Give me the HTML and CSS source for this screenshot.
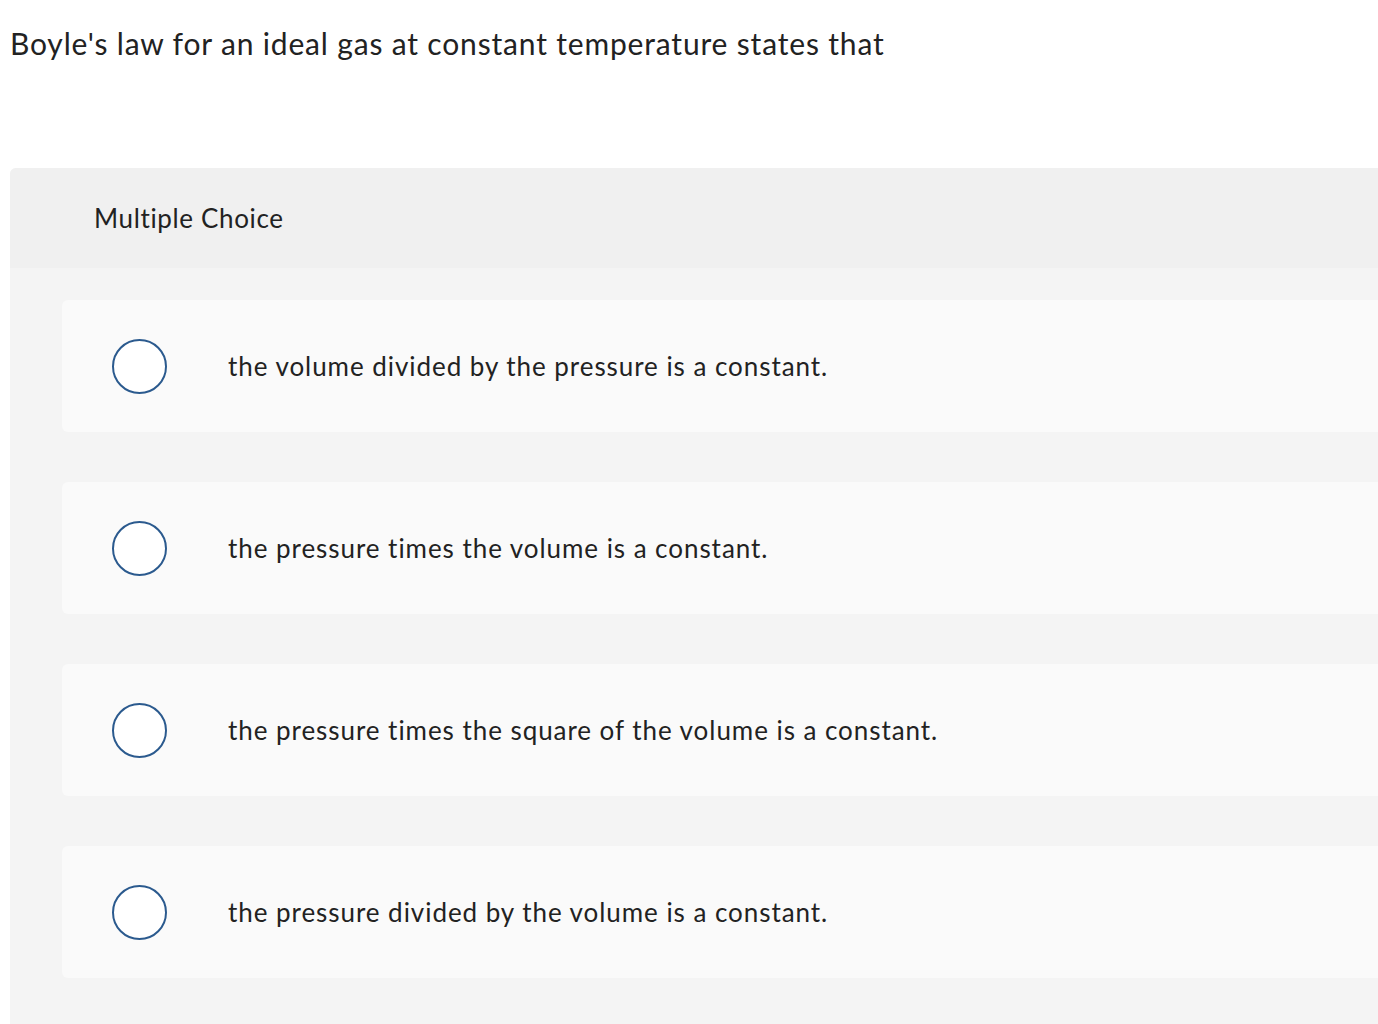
FILE: index.html
```html
<!DOCTYPE html>
<html lang="en">
<head>
    <meta charset="UTF-8">
    <meta name="viewport" content="width=device-width, initial-scale=1.0">
    <title>Multiple Choice</title>
    <link rel="stylesheet" href="styles.css">
</head>
<body>
    <p class="question">Boyle's law for an ideal gas at constant temperature states that</p>

    <div class="panel">
        <div class="panel-head">Multiple Choice</div>
        <div class="choices">
            <label class="choice">
                <span class="radio"></span>
                <span class="choice-text">the volume divided by the pressure is a constant.</span>
            </label>
            <label class="choice">
                <span class="radio"></span>
                <span class="choice-text">the pressure times the volume is a constant.</span>
            </label>
            <label class="choice">
                <span class="radio"></span>
                <span class="choice-text">the pressure times the square of the volume is a constant.</span>
            </label>
            <label class="choice">
                <span class="radio"></span>
                <span class="choice-text">the pressure divided by the volume is a constant.</span>
            </label>
        </div>
    </div>
</body>
</html>
```

FILE: styles.css
```css
body{
    margin: 0;
    background: #fff;
    font-family: Lato, "Open Sans", sans-serif;
    color: #222;
    overflow: hidden;
}
.question{
    margin: 0;
    padding: 23px 0 0 10px;
    font-size: 30px;
    letter-spacing: 0.83px;
    line-height: 40px;
    height: 168px;
    box-sizing: border-box;
}
.panel{
    margin-left: 10px;
    background: #f4f4f4;
    border-top-left-radius: 6px;
    min-height: 900px;
}
.panel-head{
    background: #f0f0f0;
    border-top-left-radius: 6px;
    height: 100px;
    display: flex;
    align-items: center;
    padding-left: 84px;
    font-size: 26px;
    letter-spacing: 0.65px;
}
.choices{
    display: flex;
    flex-direction: column;
    gap: 50px;
    padding: 32px 0 0 52px;
}
.choice{
    height: 132px;
    background: #fafafa;
    border-radius: 6px 0 0 6px;
    display: flex;
    align-items: center;
    padding-left: 50px;
}
.radio{
    width: 51px;
    height: 51px;
    border: 2px solid #2b5a8e;
    border-radius: 50%;
    background: #fff;
    flex-shrink: 0;
}
.choice-text{
    margin-left: 61px;
    font-size: 26px;
    letter-spacing: 0.95px;
}
```
